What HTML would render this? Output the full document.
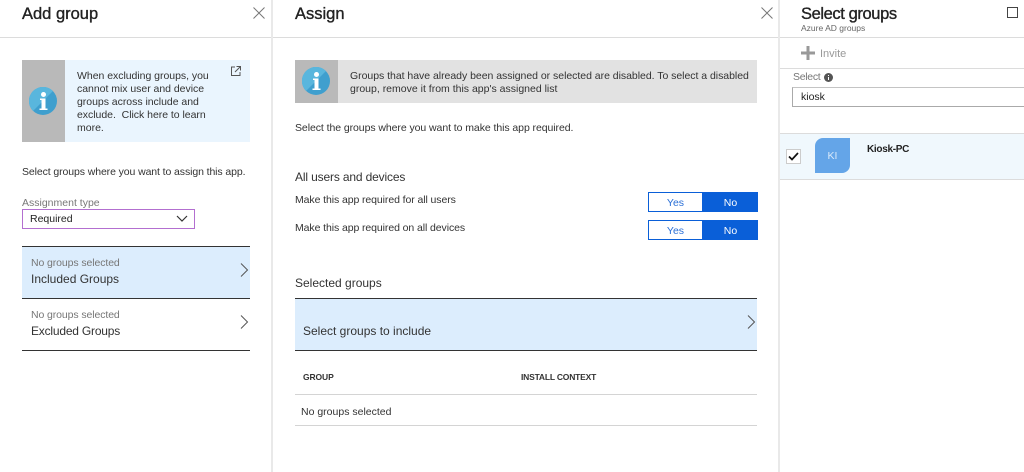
<!DOCTYPE html>
<html>
<head>
<meta charset="utf-8">
<style>
html,body{margin:0;padding:0;background:#fff}
#p{position:relative;width:1024px;height:472px;overflow:hidden;background:#fff;font-family:"Liberation Sans",sans-serif;color:#333;filter:blur(.3px)}
#p div,#p svg{position:absolute}
.t{white-space:nowrap;line-height:14px;font-size:10.5px}
.h{font-size:16.5px;line-height:20px;color:#222;white-space:nowrap;-webkit-text-stroke:.35px #222}
.l{height:1px}
.g{color:#777}
</style>
</head>
<body>
<div id="p">
<div class="l" style="left:0;top:37px;width:1024px;background:#dcdcdc"></div>
<div style="left:271px;top:0;width:2px;height:472px;background:#e9e9e9"></div>
<div style="left:778px;top:0;width:2px;height:472px;background:#e9e9e9"></div>

<div class="h" style="left:22px;top:4px">Add group</div>
<svg style="left:253px;top:7px" width="12" height="12" viewBox="0 0 12 12"><path d="M.5.5l11 11M11.500.5l-11 11" stroke="#777" stroke-width="1" fill="none"/></svg>
<div style="left:22px;top:60px;width:228px;height:82px;background:#eaf5fe"></div>
<div style="left:22px;top:60px;width:43px;height:82px;background:#b9b9b9"></div>
<svg style="left:29px;top:87px" width="28" height="28" viewBox="0 0 28 28"><circle cx="14" cy="14" r="14" fill="#3f9fce"/><path d="M4 24A14 14 0 0 1 24 4Z" fill="#59b6dd"/><circle cx="14.500" cy="7.500" r="2.500" fill="#fff"/><path d="M11 11.500h5.500v10H18.500v1.500H10.500v-1.500H12.500v-8.500H11Z" fill="#fff"/></svg>
<div class="t" style="left:77px;top:69px;letter-spacing:-.03px">When excluding groups, you</div>
<div class="t" style="left:77px;top:82px;letter-spacing:-.03px">cannot mix user and device</div>
<div class="t" style="left:77px;top:95px;letter-spacing:-.03px">groups across include and</div>
<div class="t" style="left:77px;top:108px;letter-spacing:-.03px">exclude.&nbsp; Click here to learn</div>
<div class="t" style="left:77px;top:121px">more.</div>
<svg style="left:231px;top:66px" width="10" height="10" viewBox="0 0 10 10"><path d="M4 1H.5v8.500H9V6M5.500.5h4v4M9.500.5L4 6" stroke="#555" stroke-width="1" fill="none"/></svg>

<div class="t" style="left:22px;top:165px;letter-spacing:-.1px">Select groups where you want to assign this app.</div>
<div class="t g" style="left:22px;top:196px">Assignment type</div>
<div style="left:22px;top:209px;width:171px;height:18px;border:1px solid #b36fd0;background:#fff"></div>
<div class="t" style="left:30px;top:212px;color:#222">Required</div>
<svg style="left:176px;top:215px" width="12" height="8" viewBox="0 0 12 8"><path d="M1 1l5 5 5-5" stroke="#333" stroke-width="1.200" fill="none"/></svg>

<div style="left:22px;top:246px;width:228px;height:51px;background:#dcedfd;border-top:1px solid #333;border-bottom:1px solid #333"></div>
<div class="t g" style="left:31px;top:256px;letter-spacing:-.1px">No groups selected</div>
<div class="t" style="left:31px;top:272px;font-size:12px;color:#333">Included Groups</div>
<svg style="left:240px;top:263px" width="9" height="14" viewBox="0 0 9 14"><path d="M1 .5l6.500 6.500L1 13.500" stroke="#555" stroke-width="1" fill="none"/></svg>
<div class="t g" style="left:31px;top:308px;letter-spacing:-.1px">No groups selected</div>
<div class="t" style="left:31px;top:324px;font-size:12px;color:#333;letter-spacing:-.2px">Excluded Groups</div>
<svg style="left:240px;top:315px" width="9" height="14" viewBox="0 0 9 14"><path d="M1 .5l6.500 6.500L1 13.500" stroke="#555" stroke-width="1" fill="none"/></svg>
<div class="l" style="left:22px;top:350px;width:228px;background:#333"></div>

<div class="h" style="left:295px;top:4px">Assign</div>
<svg style="left:761px;top:7px" width="12" height="12" viewBox="0 0 12 12"><path d="M.5.5l11 11M11.500.5l-11 11" stroke="#777" stroke-width="1" fill="none"/></svg>
<div style="left:295px;top:60px;width:462px;height:43px;background:#e2e2e2"></div>
<div style="left:295px;top:60px;width:43px;height:43px;background:#b9b9b9"></div>
<svg style="left:302px;top:67px" width="28" height="28" viewBox="0 0 28 28"><circle cx="14" cy="14" r="14" fill="#3f9fce"/><path d="M4 24A14 14 0 0 1 24 4Z" fill="#59b6dd"/><circle cx="14.500" cy="7.500" r="2.500" fill="#fff"/><path d="M11 11.500h5.500v10H18.500v1.500H10.500v-1.500H12.500v-8.500H11Z" fill="#fff"/></svg>
<div class="t" style="left:350px;top:69px;letter-spacing:-.03px">Groups that have already been assigned or selected are disabled. To select a disabled</div>
<div class="t" style="left:350px;top:82px">group, remove it from this app's assigned list</div>
<div class="t" style="left:295px;top:121px;letter-spacing:-.07px">Select the groups where you want to make this app required.</div>

<div class="t" style="left:295px;top:170px;font-size:12px;letter-spacing:-.15px">All users and devices</div>
<div class="t" style="left:295px;top:193px;letter-spacing:-.09px">Make this app required for all users</div>
<div class="t" style="left:295px;top:221px;letter-spacing:-.09px">Make this app required on all devices</div>

<div style="left:648px;top:192px;width:53px;height:18px;border:1px solid #0a5fd8;background:#fff"></div>
<div style="left:703px;top:192px;width:55px;height:20px;background:#0a5fd8"></div>
<div class="t" style="left:648px;top:196px;width:55px;text-align:center;color:#2a6fd6">Yes</div>
<div class="t" style="left:703px;top:196px;width:55px;text-align:center;color:#fff">No</div>
<div style="left:648px;top:220px;width:53px;height:18px;border:1px solid #0a5fd8;background:#fff"></div>
<div style="left:703px;top:220px;width:55px;height:20px;background:#0a5fd8"></div>
<div class="t" style="left:648px;top:224px;width:55px;text-align:center;color:#2a6fd6">Yes</div>
<div class="t" style="left:703px;top:224px;width:55px;text-align:center;color:#fff">No</div>

<div class="t" style="left:295px;top:276px;font-size:12px">Selected groups</div>
<div style="left:295px;top:298px;width:462px;height:51px;background:#dcedfd;border-top:1px solid #333;border-bottom:1px solid #333"></div>
<div class="t" style="left:303px;top:324px;font-size:12px">Select groups to include</div>
<svg style="left:747px;top:315px" width="9" height="14" viewBox="0 0 9 14"><path d="M1 .5l6.500 6.500L1 13.500" stroke="#555" stroke-width="1" fill="none"/></svg>
<div class="t" style="left:303px;top:370px;font-size:8.5px;font-weight:bold;color:#333;letter-spacing:-.1px">GROUP</div>
<div class="t" style="left:521px;top:370px;font-size:8.5px;font-weight:bold;color:#333;letter-spacing:-.2px">INSTALL CONTEXT</div>
<div class="l" style="left:295px;top:394px;width:462px;background:#d4d4d4"></div>
<div class="t" style="left:301px;top:405px">No groups selected</div>
<div class="l" style="left:295px;top:425px;width:462px;background:#d4d4d4"></div>

<div class="h" style="left:801px;top:4px;letter-spacing:-.4px">Select groups</div>
<div class="t" style="left:801px;top:21px;font-size:8.5px;color:#666">Azure AD groups</div>
<div style="left:1007px;top:7px;width:9px;height:9px;border:1px solid #444"></div>
<svg style="left:801px;top:46px" width="14" height="14" viewBox="0 0 14 14"><path d="M5.500 0h3v5.500H14v3H8.500V14h-3V8.500H0v-3h5.500Z" fill="#999"/></svg>
<div class="t g" style="left:820px;top:47px;font-size:11px;color:#999">Invite</div>
<div class="l" style="left:780px;top:68px;width:244px;background:#dcdcdc"></div>
<div class="t g" style="left:793px;top:70px;letter-spacing:-.3px">Select</div>
<svg style="left:824px;top:73px" width="9" height="9" viewBox="0 0 9 9"><circle cx="4.500" cy="4.500" r="4.500" fill="#555"/><path d="M4 2h1v1H4ZM4 4h1v3H4Z" fill="#fff"/></svg>
<div style="left:792px;top:87px;width:240px;height:18px;border:1px solid #c4c4c4;border-bottom:1px solid #aaa;border-left:1px solid #aaa;background:#fff"></div>
<div class="t" style="left:801px;top:90px;color:#222">kiosk</div>

<div style="left:780px;top:133px;width:244px;height:45px;background:#f0f8fd;border-top:1px solid #dcdcdc;border-bottom:1px solid #dcdcdc"></div>
<div style="left:786px;top:149px;width:13px;height:13px;border:1px solid #ccc;background:#fff"></div>
<svg style="left:788px;top:152px" width="11" height="9" viewBox="0 0 11 9"><path d="M1 4.500l3 3 6-6.500" stroke="#111" stroke-width="1.700" fill="none"/></svg>
<div style="left:815px;top:138px;width:35px;height:35px;background:#64a5e8;border-radius:8px 0 8px 0"></div>
<div class="t" style="left:815px;top:149px;width:35px;text-align:center;color:#d9e9fa">KI</div>
<div class="t" style="left:867px;top:143px;font-weight:bold;font-size:10px;color:#222;letter-spacing:-.3px">Kiosk-PC</div>
</div>
</body>
</html>
